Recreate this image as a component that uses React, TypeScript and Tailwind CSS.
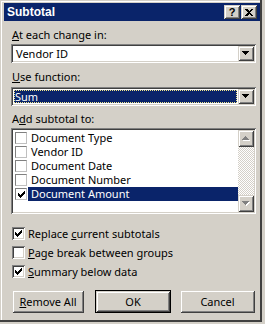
import React from "react";

const raised =
  "shadow-[inset_1px_1px_#d4d0c8,inset_-1px_-1px_#404040,inset_2px_2px_#ffffff,inset_-2px_-2px_#808080]";
const sunken =
  "shadow-[inset_1px_1px_#808080,inset_-1px_-1px_#ffffff,inset_2px_2px_#404040,inset_-2px_-2px_#d4d0c8]";

function DownArrow({ dim }: { dim?: boolean }) {
  const c = dim ? "#808080" : "#000000";
  return (
    <svg width="8" height="5" viewBox="0 0 8 5" shapeRendering="crispEdges">
      {dim && (
        <g fill="#ffffff">
          <rect x="1" y="1" width="7" height="1" />
          <rect x="2" y="2" width="5" height="1" />
          <rect x="3" y="3" width="3" height="1" />
          <rect x="4" y="4" width="1" height="1" />
        </g>
      )}
      <g fill={c}>
        <rect x="0" y="0" width="7" height="1" />
        <rect x="1" y="1" width="5" height="1" />
        <rect x="2" y="2" width="3" height="1" />
        <rect x="3" y="3" width="1" height="1" />
      </g>
    </svg>
  );
}

function UpArrow({ dim }: { dim?: boolean }) {
  const c = dim ? "#808080" : "#000000";
  return (
    <svg width="8" height="5" viewBox="0 0 8 5" shapeRendering="crispEdges">
      {dim && (
        <g fill="#ffffff">
          <rect x="4" y="1" width="1" height="1" />
          <rect x="3" y="2" width="3" height="1" />
          <rect x="2" y="3" width="5" height="1" />
          <rect x="1" y="4" width="7" height="1" />
        </g>
      )}
      <g fill={c}>
        <rect x="3" y="0" width="1" height="1" />
        <rect x="2" y="1" width="3" height="1" />
        <rect x="1" y="2" width="5" height="1" />
        <rect x="0" y="3" width="7" height="1" />
      </g>
    </svg>
  );
}

function Check() {
  const rows = [
    "......X",
    ".....XX",
    "X...XXX",
    "XX.XXX.",
    "XXXXX..",
    ".XXX...",
    "..X....",
  ];
  return (
    <svg width="7" height="7" viewBox="0 0 7 7" shapeRendering="crispEdges">
      {rows.flatMap((r, y) =>
        r.split("").map((ch, x) =>
          ch === "X" ? <rect key={`${x}-${y}`} x={x} y={y} width="1" height="1" fill="#000" /> : null
        )
      )}
    </svg>
  );
}

function Combo({ text, selected }: { text: string; selected?: boolean }) {
  return (
    <div className={`h-[19px] bg-white ${sunken} p-[2px] flex`}>
      <div className="flex-1 flex items-center pl-[1px] pr-[1px]">
        {selected ? (
          <div className="h-[13px] w-full bg-[#0a246a] text-white flex items-center pl-[1px] outline-1 outline-dotted outline-[#f0e68c] -outline-offset-1">
            {text}
          </div>
        ) : (
          <div className="pl-[2px] text-black">{text}</div>
        )}
      </div>
      <div className={`w-[16px] bg-[#d4d0c8] ${raised} flex items-center justify-center`}>
        <DownArrow />
      </div>
    </div>
  );
}

function ListRow({ label, checked, selected }: { label: string; checked?: boolean; selected?: boolean }) {
  return (
    <div className="h-[14px] flex items-center">
      <div className="ml-[2px] w-[12px] h-[12px] bg-white border border-t-[#808080] border-l-[#808080] border-r-[#c0c0c0] border-b-[#c0c0c0] flex items-center justify-center">
        {checked && <Check />}
      </div>
      <div
        className={`ml-[1px] h-[14px] flex-1 flex items-center pl-[3px] ${
          selected ? "bg-[#0a246a] text-white" : "text-black"
        }`}
      >
        {label}
      </div>
    </div>
  );
}

function Opt({ children, checked }: { children: React.ReactNode; checked?: boolean }) {
  return (
    <div className="h-[19px] flex items-center">
      <div className={`ml-[1px] w-[13px] h-[13px] bg-white ${sunken} flex items-center justify-center`}>
        {checked && <Check />}
      </div>
      <div className="ml-[3px] text-black">{children}</div>
    </div>
  );
}

export default function App() {
  return (
    <div
      className="w-[265px] h-[324px] bg-[#d4d0c8] text-[11px] leading-[14px] overflow-hidden"
      style={{ fontFamily: '"Noto Sans", "Open Sans", sans-serif' }}
    >
      <div
        className={`w-[262px] h-[322px] bg-[#d4d0c8] pl-[4px] pr-[2px] pt-[3px] flex flex-col shadow-[inset_-1px_-1px_#404040,inset_-2px_-2px_#404040,inset_1px_1px_#d4d0c8,inset_2px_2px_#ffffff]`}
      >
        {/* Title bar */}
        <div className="h-[18px] bg-[#0a246a] flex items-center pl-[3px] pr-[3px]">
          <div
            className="flex-1 text-white font-bold text-[12px]"
            style={{ fontFamily: '"Liberation Sans", Arial, sans-serif' }}
          >
            Subtotal
          </div>
          <div className={`w-[16px] h-[14px] bg-[#d4d0c8] ${raised} flex items-center justify-center`}>
            <span
              className="font-bold text-[11px] leading-[11px] text-black"
              style={{ fontFamily: '"Liberation Sans", Arial, sans-serif' }}
            >
              ?
            </span>
          </div>
          <div className={`ml-[1px] w-[16px] h-[14px] bg-[#d4d0c8] ${raised} flex items-center justify-center`}>
            <svg width="8" height="7" viewBox="0 0 8 7" shapeRendering="crispEdges">
              <path d="M0 0h2l2 2 2-2h2L5 3.5 8 7H6L4 5 2 7H0l3-3.5z" fill="#000" />
            </svg>
          </div>
        </div>

        {/* Body */}
        <div className="pl-[7px] pr-[4px] flex flex-col">
          <div className="mt-[7px] h-[14px] pl-[1px] text-black">
            <span className="underline">A</span>t each change in:
          </div>
          <div className="mt-[2px]">
            <Combo text="Vendor ID" />
          </div>
          <div className="mt-[7px] h-[14px] pl-[1px] text-black">
            <span className="underline">U</span>se function:
          </div>
          <div className="mt-[3px]">
            <Combo text="Sum" selected />
          </div>
          <div className="mt-[6px] h-[14px] pl-[1px] text-black">
            A<span className="underline">d</span>d subtotal to:
          </div>
          <div className={`mt-[2px] h-[86px] bg-white ${sunken} p-[2px] flex`}>
            <div className="flex-1 flex flex-col pt-[1px]">
              <ListRow label="Document Type" />
              <ListRow label="Vendor ID" />
              <ListRow label="Document Date" />
              <ListRow label="Document Number" />
              <ListRow label="Document Amount" checked selected />
            </div>
            <div className="w-[16px] flex flex-col">
              <div className={`h-[17px] bg-[#d4d0c8] ${raised} flex items-center justify-center`}>
                <UpArrow dim />
              </div>
              <div className="flex-1 bg-[repeating-conic-gradient(#d4d0c8_0_25%,#ffffff_0_50%)] bg-size-[2px_2px]" />
              <div className={`h-[17px] bg-[#d4d0c8] ${raised} flex items-center justify-center`}>
                <DownArrow dim />
              </div>
            </div>
          </div>

          <div className="mt-[10px] flex flex-col">
            <Opt checked>
              Replace <span className="underline">c</span>urrent subtotals
            </Opt>
            <Opt>
              <span className="underline">P</span>age break between groups
            </Opt>
            <Opt checked>
              <span className="underline">S</span>ummary below data
            </Opt>
          </div>

          <div className="mt-[9px] flex items-center">
            <div className={`ml-[1px] w-[72px] h-[23px] bg-[#d4d0c8] ${raised} flex items-center justify-center text-black`}>
              <span>
                <span className="underline">R</span>emove All
              </span>
            </div>
            <div className="ml-[11px] w-[76px] h-[23px] border border-black">
              <div className={`w-full h-full bg-[#d4d0c8] ${raised} flex items-center justify-center text-black`}>
                OK
              </div>
            </div>
            <div className={`ml-[9px] w-[75px] h-[23px] bg-[#d4d0c8] ${raised} flex items-center justify-center text-black`}>
              Cancel
            </div>
          </div>
        </div>
      </div>
    </div>
  );
}
